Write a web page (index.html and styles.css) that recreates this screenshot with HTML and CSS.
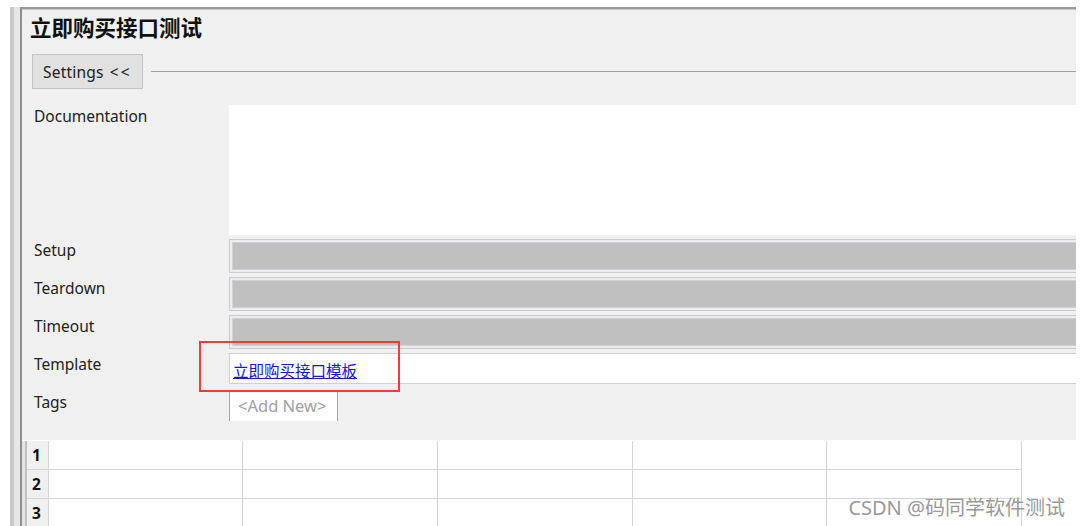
FILE: index.html
```html
<!DOCTYPE html>
<html lang="zh">
<head>
<meta charset="utf-8">
<title>立即购买接口测试</title>
<link rel="stylesheet" href="styles.css">
</head>
<body>
<div class="frame">
  <div class="side"></div>
  <div class="main">
    <section class="panel">
      <h1 class="title">立即购买接口测试</h1>
      <div class="settings-row">
        <button class="btn">Settings <span class="chev">&lt;&lt;</span></button>
        <div class="rule"></div>
      </div>
      <div class="form">
        <div class="label">Documentation</div>
        <div class="field doc"></div>
        <div class="label">Setup</div>
        <div class="field disabled"></div>
        <div class="label">Teardown</div>
        <div class="field disabled"></div>
        <div class="label">Timeout</div>
        <div class="field disabled"></div>
        <div class="label">Template</div>
        <div class="field template"><a class="link" href="#">立即购买接口模板</a></div>
        <div class="label tags-label">Tags</div>
        <div class="tags"><span class="tab">&lt;Add New&gt;</span></div>
      </div>
    </section>
    <div class="gridwrap">
      <div class="gutter"></div>
      <div class="grid">
        <div class="hd">1</div><div class="cell"></div><div class="cell"></div><div class="cell"></div><div class="cell"></div><div class="cell"></div>
        <div class="hd">2</div><div class="cell"></div><div class="cell"></div><div class="cell"></div><div class="cell"></div><div class="cell"></div>
        <div class="hd">3</div><div class="cell"></div><div class="cell"></div><div class="cell"></div><div class="cell"></div><div class="cell"></div>
      </div>
    </div>
  </div>
</div>
<div class="highlight"></div>
<div class="watermark">CSDN @码同学软件测试</div>
</body>
</html>
```

FILE: styles.css
```css
html, body {
  margin: 0;
  padding: 0;
}
body {
  width: 1080px;
  height: 526px;
  overflow: hidden;
  position: relative;
  background: #ffffff;
  font-family: "Noto Sans", "Noto Sans CJK SC", sans-serif;
  color: #1e1e1e;
}
.frame {
  display: flex;
  height: 526px;
  padding-top: 7px;
  box-sizing: border-box;
}
.side {
  margin-left: 10px;
  width: 10px;
  box-sizing: border-box;
  border-left: 4px solid #c9c9c9;
  background: #e7e7e7;
}
.main {
  width: 1056px;
  display: flex;
  flex-direction: column;
  border-left: 2px solid #8e8e8e;
  border-top: 2px solid #9a9a9a;
  box-sizing: border-box;
  overflow: hidden;
}
.panel {
  flex-shrink: 0;
  background: #f0f0f0;
  padding: 4px 0 19px 0;
  box-shadow: inset 0 1px 0 #c8c8c8;
  overflow: hidden;
}
.title {
  margin: 0;
  padding-left: 8px;
  font-family: "Noto Sans CJK SC", sans-serif;
  font-weight: 700;
  font-size: 21.5px;
  line-height: 28px;
  color: #111;
}
.settings-row {
  display: flex;
  align-items: center;
  gap: 8px;
  margin: 13px 0 16px 10px;
}
.btn {
  width: 111px;
  height: 35px;
  box-sizing: border-box;
  margin: 0;
  padding: 0 0 0 10px;
  text-align: left;
  background: #e1e1e1;
  border: 1px solid #c4c4c4;
  font-family: "Noto Sans", sans-serif;
  font-size: 15.5px;
  letter-spacing: 0.2px;
  color: #222;
}
.chev {
  letter-spacing: 2px;
  margin-left: 2px;
}
.rule {
  flex: 1;
  height: 1px;
  background: #a0a0a0;
}
.form {
  display: grid;
  grid-template-columns: 207px 1fr;
  row-gap: 4px;
  margin-right: -12px;
}
.label {
  padding-left: 12px;
  font-size: 15.5px;
  line-height: 22px;
  color: #222;
}
.tags-label {
  padding-top: 3px;
}
.field {
  box-sizing: border-box;
}
.doc {
  height: 130px;
  background: #ffffff;
}
.disabled {
  height: 34px;
  background: #c0c0c0;
  border: 1px solid #cbcbd2;
  box-shadow: inset 0 0 0 2px #ececef, inset 0 0 0 3px #d0d0d5;
}
.template {
  height: 31px;
  background: #ffffff;
  border: 1px solid #d0d0d0;
  padding-left: 3px;
  display: flex;
  align-items: center;
}
.link {
  font-family: "Noto Sans CJK SC", sans-serif;
  font-size: 15.5px;
  color: #1414f0;
  text-decoration: underline;
  line-height: 20px;
  margin-top: 3px;
}
.tags {
  display: flex;
}
.tab {
  margin-top: 4px;
  width: 109px;
  height: 29px;
  box-sizing: border-box;
  background: #ffffff;
  border-left: 1px solid #a8a8a8;
  border-right: 1px solid #a8a8a8;
  padding-left: 8px;
  font-size: 16.5px;
  line-height: 28px;
  color: #a0a0a0;
}
.gridwrap {
  flex: 1 0 auto;
  display: flex;
  padding-top: 1px;
}
.gutter {
  width: 5px;
  box-sizing: border-box;
  background: #e4e4e4;
  border-right: 2px solid #c2c2c2;
}
.grid {
  display: grid;
  grid-template-columns: 22px 194px 195px 195px 194px 195px;
  grid-auto-rows: 29px;
  align-content: start;
}
.hd, .cell {
  box-sizing: border-box;
  border-right: 1px solid #d6d6d6;
  border-bottom: 1px solid #d6d6d6;
}
.hd {
  background: #f0f0f0;
  padding-left: 5px;
  font-weight: 700;
  font-size: 15.5px;
  line-height: 29px;
  color: #111;
}
.cell {
  background: #ffffff;
}
.highlight {
  position: absolute;
  left: 199px;
  top: 341px;
  width: 201px;
  height: 51px;
  box-sizing: border-box;
  border: 2px solid #f43b3b;
}
.watermark {
  position: absolute;
  right: 15px;
  top: 494px;
  font-family: "Noto Sans", "Noto Sans CJK SC", sans-serif;
  font-size: 20px;
  line-height: 28px;
  color: #999999;
  text-shadow: 0 0 2px #fff;
}
```
